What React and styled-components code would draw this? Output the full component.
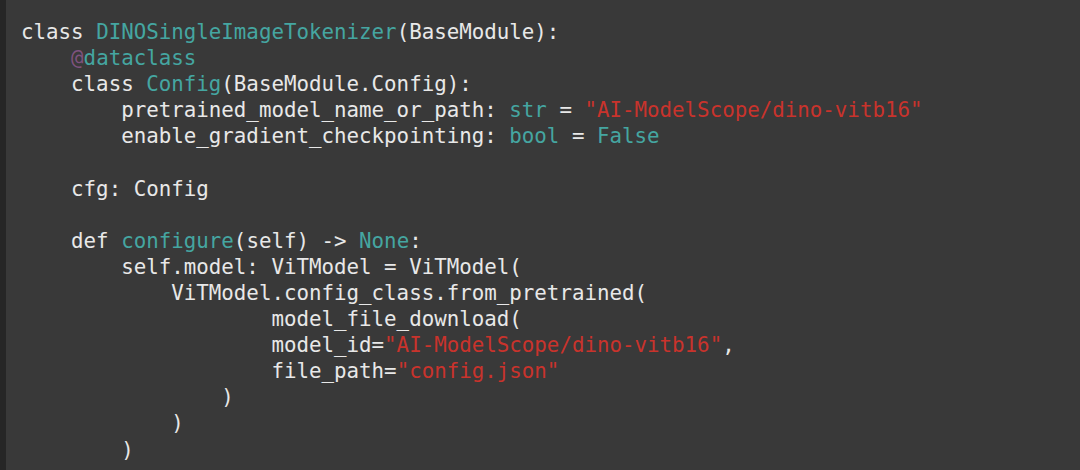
import styled, { createGlobalStyle } from "styled-components";

const GlobalStyle = createGlobalStyle`
  html, body {
    margin: 0;
    padding: 0;
    background: #393939;
  }
`;

const Editor = styled.div`
  width: 1080px;
  height: 470px;
  display: flex;
  background: #393939;
  overflow: hidden;
`;

const Gutter = styled.div`
  width: 6px;
  flex-shrink: 0;
  background: #262626;
`;

const Code = styled.pre`
  margin: 0;
  padding: 19px 0 0 15px;
  font-family: "DejaVu Sans Mono", "Liberation Mono", monospace;
  font-size: 20.8px;
  line-height: 26.1px;
  color: #e8e8e8;
  white-space: pre;
`;

const Line = styled.div`
  height: 26.1px;
  padding-left: ${(p) => p.$indent * 4}ch;
`;

const tones = {
  plain: "#e8e8e8",
  type: "#45a6a1",
  str: "#c9332c",
  at: "#7f527f",
};

const Tok = styled.span`
  color: ${(p) => tones[p.$tone] || tones.plain};
`;

// [indent, [[text, tone], ...]]
const lines = [
  [0, [["class "], ["DINOSingleImageTokenizer", "type"], ["(BaseModule):"]]],
  [1, [["@", "at"], ["dataclass", "type"]]],
  [1, [["class "], ["Config", "type"], ["(BaseModule.Config):"]]],
  [2, [["pretrained_model_name_or_path: "], ["str", "type"], [" = "], ['"AI-ModelScope/dino-vitb16"', "str"]]],
  [2, [["enable_gradient_checkpointing: "], ["bool", "type"], [" = "], ["False", "type"]]],
  [0, []],
  [1, [["cfg: Config"]]],
  [0, []],
  [1, [["def "], ["configure", "type"], ["(self) -> "], ["None", "type"], [":"]]],
  [2, [["self.model: ViTModel = ViTModel("]]],
  [3, [["ViTModel.config_class.from_pretrained("]]],
  [5, [["model_file_download("]]],
  [5, [["model_id="], ['"AI-ModelScope/dino-vitb16"', "str"], [","]]],
  [5, [["file_path="], ['"config.json"', "str"]]],
  [4, [[")"]]],
  [3, [[")"]]],
  [2, [[")"]]],
];

const App = () => {
  return (
    <>
      <GlobalStyle />
      <Editor>
        <Gutter />
        <Code>
          {lines.map(([indent, toks], i) => (
            <Line key={i} $indent={indent}>
              {toks.map(([text, tone], j) => (
                <Tok key={j} $tone={tone}>
                  {text}
                </Tok>
              ))}
            </Line>
          ))}
        </Code>
      </Editor>
    </>
  );
};

export default App;
